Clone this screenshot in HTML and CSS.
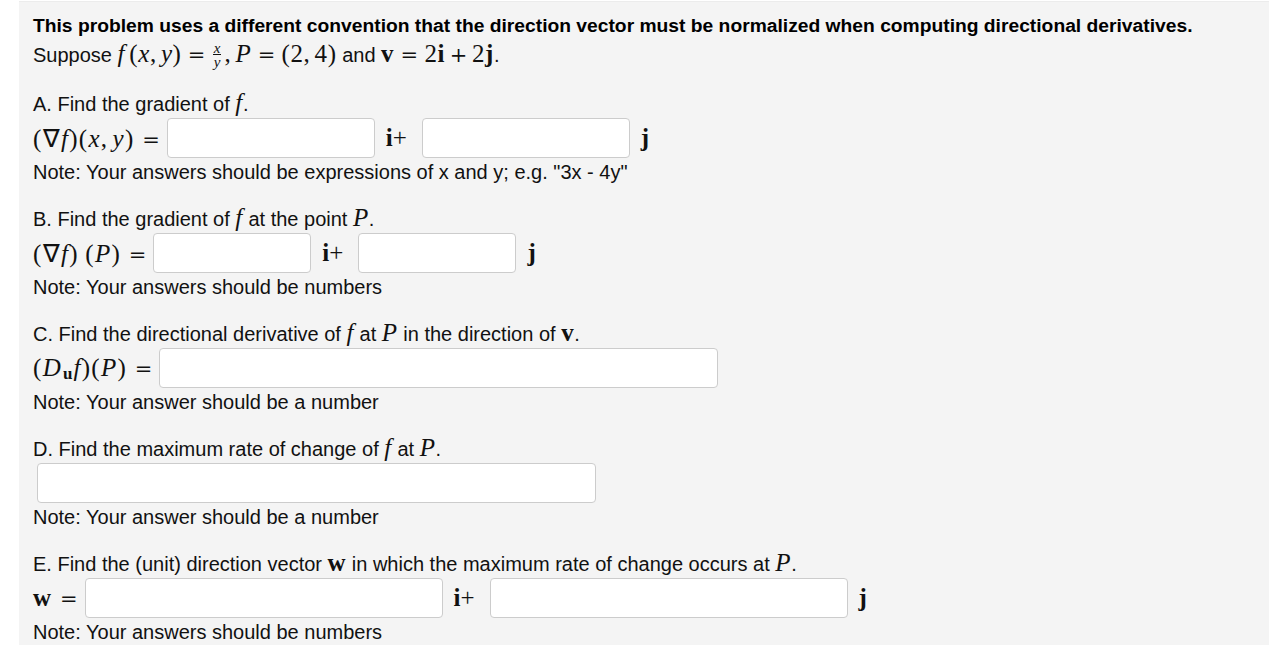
FILE: index.html
```html
<!DOCTYPE html>
<html>
<head>
<meta charset="utf-8">
<link rel="stylesheet" href="styles.css">
</head>
<body>
<div class="panel">
  <div class="title">This problem uses a different convention that the direction vector must be normalized when computing directional derivatives.</div>
  <div class="line">Suppose <span class="m"><i>f</i><span class="th"></span>(<i>x</i>,<span class="th"></span><i>y</i>)<span class="rel">=</span><span class="frac"><span class="num"><i>x</i></span><span class="den"><i>y</i></span></span><span class="cm">,</span><span class="th"></span><i>P</i><span class="rel">=</span>(2,<span class="th"></span>4)</span> and <span class="m"><b>v</b><span class="rel">=</span>2<b>i</b><span class="bin">+</span>2<b>j</b></span>.</div>

  <section class="part first">
    <div class="line">A. Find the gradient of <span class="m"><i>f</i></span>.</div>
    <div class="row">
      <span class="m label">(∇<i>f</i>)(<i>x</i>,<span class="th"></span><i>y</i>)<span class="rel">=</span></span>
      <span class="ans w208"></span>
      <span class="m unit"><b>i</b>+</span>
      <span class="ans w208 second"></span>
      <span class="m unit"><b>j</b></span>
    </div>
    <div class="line">Note: Your answers should be expressions of x and y; e.g. "3x - 4y"</div>
  </section>

  <section class="part">
    <div class="line">B. Find the gradient of <span class="m"><i>f</i></span> at the point <span class="m"><i>P</i></span>.</div>
    <div class="row">
      <span class="m label">(∇<i>f</i>)<span class="th wide"></span>(<i>P</i>)<span class="rel">=</span></span>
      <span class="ans w158"></span>
      <span class="m unit"><b>i</b>+</span>
      <span class="ans w158 second"></span>
      <span class="m unit"><b>j</b></span>
    </div>
    <div class="line">Note: Your answers should be numbers</div>
  </section>

  <section class="part">
    <div class="line">C. Find the directional derivative of <span class="m"><i>f</i></span> at <span class="m"><i>P</i></span> in the direction of <span class="m"><b>v</b></span>.</div>
    <div class="row">
      <span class="m label">(<i>D</i><sub><b>u</b></sub><i>f</i>)(<i>P</i>)<span class="rel">=</span></span>
      <span class="ans w559"></span>
    </div>
    <div class="line">Note: Your answer should be a number</div>
  </section>

  <section class="part">
    <div class="line">D. Find the maximum rate of change of <span class="m"><i>f</i></span> at <span class="m"><i>P</i></span>.</div>
    <div class="row">
      <span class="ans w559 solo"></span>
    </div>
    <div class="line">Note: Your answer should be a number</div>
  </section>

  <section class="part">
    <div class="line">E. Find the (unit) direction vector <span class="m"><b>w</b></span> in which the maximum rate of change occurs at <span class="m"><i>P</i></span>.</div>
    <div class="row">
      <span class="m label"><b>w</b><span class="rel">=</span></span>
      <span class="ans w358"></span>
      <span class="m unit"><b>i</b>+</span>
      <span class="ans w358 second"></span>
      <span class="m unit"><b>j</b></span>
    </div>
    <div class="line">Note: Your answers should be numbers</div>
  </section>
</div>
</body>
</html>
```
FILE: styles.css
```css
html, body {
  margin: 0;
  padding: 0;
  background: #ffffff;
}
body {
  font-family: "Liberation Sans", Arial, sans-serif;
  font-size: 20px;
  color: #111111;
  overflow: hidden;
}
.panel {
  margin-left: 19px;
  margin-top: 1px;
  background: #f4f4f4;
  border-top: 1px solid #ececec;
  padding: 10px 14px 40px 14px;
  min-height: 700px;
}
.title {
  font-weight: bold;
  font-size: 19.25px;
  line-height: 28px;
  color: #000;
}
.line {
  line-height: 28px;
  height: 28px;
  white-space: nowrap;
}
.m {
  font-family: "Liberation Serif", "Times New Roman", serif;
  font-size: 25px;
  letter-spacing: 0.6px;
  color: #111;
}
.m b { font-weight: bold; }
.m i { font-style: italic; }
.th { display: inline-block; width: 0.167em; }
.th.wide { width: 0.26em; }
.cm { display: inline-block; margin-left: 2px; }
.rel, .bin {
  font-family: "DejaVu Serif", serif;
  font-size: 21px;
  font-weight: normal;
  letter-spacing: 0;
}
.rel { margin: 0 0.3em; }
.bin { margin: 0 0.22em; }
.m sub {
  font-size: 17px;
  vertical-align: -3px;
  line-height: 0;
  letter-spacing: 0;
  margin: 0 1px 0 1px;
}
.frac {
  display: inline-flex;
  flex-direction: column;
  align-items: center;
  vertical-align: 9px;
  font-size: 15px;
  letter-spacing: 0;
  margin: 0 1px 0 1px;
}
.frac .num, .frac .den {
  display: block;
  height: 10px;
  line-height: 10px;
  overflow: visible;
}
.frac .num {
  border-bottom: 1px solid #111;
  padding: 0 1px 1px;
}
.frac .den { padding-top: 2px; }
.part { margin-top: 21px; }
.part + .part { margin-top: 18px; }
.row {
  display: flex;
  align-items: center;
  height: 41px;
  padding-top: 1px;
  box-sizing: border-box;
}
.label {
  margin-right: 7px;
  letter-spacing: 1.3px;
}
.label .rel { margin: 0 0 0 0.36em; }
.ans {
  display: block;
  height: 40px;
  box-sizing: border-box;
  background: #ffffff;
  border: 1px solid #cccccc;
  border-radius: 4px;
}
.ans.solo { margin-left: 4px; }
.unit {
  margin-left: 11px;
  letter-spacing: 0;
}
.ans.second { margin-left: 15px; }
.w208 { width: 208px; }
.w158 { width: 158px; }
.w559 { width: 559px; }
.w358 { width: 358px; }
```
